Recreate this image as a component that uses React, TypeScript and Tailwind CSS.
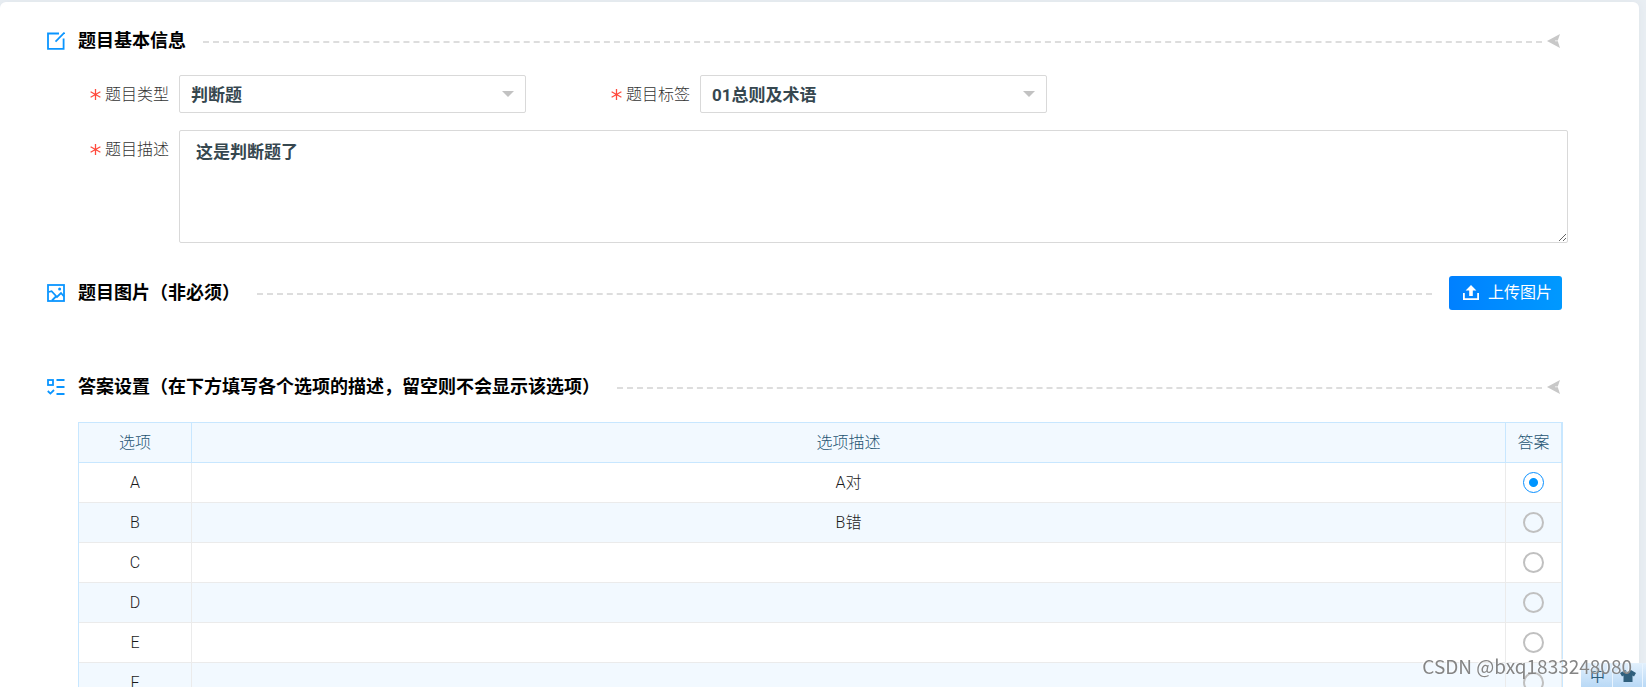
import { useState } from "react";
import type { ReactNode } from "react";

const options = [
  { key: "A", text: "A对" },
  { key: "B", text: "B错" },
  { key: "C", text: "" },
  { key: "D", text: "" },
  { key: "E", text: "" },
  { key: "F", text: "" },
];

function EditIcon() {
  return (
    <svg className="size-[18px]" viewBox="0 0 18 18" fill="none" stroke="#0a95ff">
      <path d="M12 1.5H1V16.8H16.6V6.5" strokeWidth="1.8" />
      <path d="M17.5 .6L8.5 9.6" strokeWidth="1.8" />
    </svg>
  );
}

function PictureIcon() {
  return (
    <svg className="size-[18px]" viewBox="0 0 18 18" fill="none" stroke="#0a95ff" strokeWidth="1.8">
      <rect x="1" y="1" width="16" height="16" />
      <path d="M1.5 8L4.6 7.2L10 13L14 9L17 12.5M5 16.5L9.4 12" />
      <circle cx="12.6" cy="5" r="1.5" fill="#0a95ff" stroke="none" />
    </svg>
  );
}

function ListIcon() {
  return (
    <svg className="size-[18px]" viewBox="0 0 18 18" fill="none" stroke="#0a95ff" strokeWidth="1.8">
      <rect x="1" y="2" width="5" height="5" />
      <path d="M9.5 2H17.5M9.5 9H17.5M9.5 16H17.5M.8 13L3.4 15.6L7 12" />
    </svg>
  );
}

function ArrowTail() {
  return (
    <svg className="h-[14px] w-[13px] shrink-0" viewBox="0 0 13 14" fill="#c8c8c8">
      <path d="M0 7L13 0L10.8 6.4H8V7.2H10.8L13 14Z" />
    </svg>
  );
}

function SectionHead({ icon, title, children }: { icon: ReactNode; title: string; children?: ReactNode }) {
  return (
    <div className="flex h-[34px] items-center">
      {icon}
      <h2 className="ml-[13px] text-[18px] font-bold leading-[26px] text-black">{title}</h2>
      <div className="ml-[17px] mt-0.5 flex-1 border-t-2 border-dashed border-[#ddd]" />
      {children}
    </div>
  );
}

function Label({ htmlFor, children }: { htmlFor: string; children: ReactNode }) {
  return (
    <label
      htmlFor={htmlFor}
      className="flex h-[38px] w-[132px] shrink-0 items-center justify-end gap-1 pr-[10px] text-[16px] font-light text-[#333]"
    >
      <svg className="size-[11px]" viewBox="0 0 11 11" stroke="#ff4a3d" strokeWidth="1.3">
        <path d="M5.5 0V11M.6 2.8L10.4 8.2M10.4 2.8L.6 8.2" />
      </svg>
      <span className="pt-0.5">{children}</span>
    </label>
  );
}

function SelectField({ id, label, value }: { id: string; label: string; value: string }) {
  return (
    <div className="flex">
      <Label htmlFor={id}>{label}</Label>
      <div className="relative w-[347px]">
        <select
          id={id}
          className="h-[38px] w-full appearance-none rounded-[2px] border border-[#d9d9d9] bg-white px-[11px] pt-[3px] text-[17px] font-bold text-[#36474f] outline-none"
        >
          <option>{value}</option>
        </select>
        <svg className="pointer-events-none absolute right-3 top-4 h-[6px] w-3" viewBox="0 0 12 6" fill="#c2c2c2">
          <path d="M0 0H12L6 6Z" />
        </svg>
      </div>
    </div>
  );
}

export default function App() {
  const [answer, setAnswer] = useState("A");
  return (
    <div className="h-screen overflow-hidden bg-[#e9eef3] pr-[7px] pt-[2px] font-['Roboto','Noto_Sans_CJK_SC',sans-serif]">
      <main className="min-h-full rounded-md bg-white pl-[47px] pr-[76px] pt-[22px] shadow-[0_0_8px_#dde4ea]">
        <SectionHead icon={<EditIcon />} title="题目基本信息">
          <div className="ml-[5px] mr-[3px]">
            <ArrowTail />
          </div>
        </SectionHead>

        <form className="-mr-[5px] mt-[17px] flex flex-col gap-[17px]">
          <div className="flex gap-[42px]">
            <SelectField id="type" label="题目类型" value="判断题" />
            <SelectField id="tag" label="题目标签" value="01总则及术语" />
          </div>
          <div className="flex">
            <Label htmlFor="desc">题目描述</Label>
            <textarea
              id="desc"
              defaultValue="这是判断题了"
              className="h-[113px] flex-1 resize rounded-[2px] border border-[#d9d9d9] bg-white px-4 py-[9px] text-[17px] font-bold leading-[25px] text-[#36474f] outline-none"
            />
          </div>
        </form>

        <div className="mt-[33px]">
          <SectionHead icon={<PictureIcon />} title="题目图片（非必须）">
            <button
              type="button"
              className="ml-[17px] mr-px flex h-[34px] items-center gap-[9px] rounded-[3px] bg-linear-to-r from-[#0080ff] to-[#0099ff] pl-[14px] pr-[10px] text-[16px] text-white"
            >
              <svg className="size-4" viewBox="0 0 16 16" fill="white">
                <path d="M8 0L13.4 5.4H9.8V11H6.2V5.4H2.6ZM0 8H1.8V13.2H14.2V8H16V15H0Z" />
              </svg>
              上传图片
            </button>
          </SectionHead>
        </div>

        <div className="mt-[60px]">
          <SectionHead icon={<ListIcon />} title="答案设置（在下方填写各个选项的描述，留空则不会显示该选项）">
            <div className="ml-[5px] mr-[3px]">
              <ArrowTail />
            </div>
          </SectionHead>
        </div>

        <div className="ml-[31px] mt-[18px] border border-[#c8e7ff]">
          <table className="w-full table-fixed border-separate border-spacing-0 text-center text-[16px] font-light leading-5 text-[#1a1a1a]">
            <thead>
              <tr className="h-10 bg-[#f2f9ff] text-[#1f5573]">
                <th className="w-[113px] border-b border-r border-[#c8e7ff] p-0 font-light">选项</th>
                <th className="border-b border-r border-[#c8e7ff] p-0 font-light">选项描述</th>
                <th className="w-[56px] border-b border-r border-[#c8e7ff] p-0 font-light">答案</th>
              </tr>
            </thead>
            <tbody>
              {options.map((o) => (
                <tr key={o.key} className="h-10 even:bg-[#f2f9ff]">
                  <td className="border-b border-r border-[#ebebeb] p-0">{o.key}</td>
                  <td className="border-b border-r border-[#ebebeb] p-0">{o.text}</td>
                  <td className="border-b border-r border-[#ebebeb] p-0">
                    <input
                      type="radio"
                      name="answer"
                      aria-label={o.key}
                      checked={answer === o.key}
                      onChange={() => setAnswer(o.key)}
                      className="mx-auto block size-[21px] appearance-none rounded-full border-2 border-[#c0c0c0] checked:border checked:border-[#0a90ff] checked:bg-[radial-gradient(circle,#0095ff_4px,transparent_5px)]"
                    />
                  </td>
                </tr>
              ))}
            </tbody>
          </table>
        </div>
      </main>

      <div className="fixed bottom-0 right-0 flex h-6 w-[65px] items-center border-t border-[#e3f1fd] bg-linear-to-b from-[#e0effc] to-[#b9d9f6] text-[#2f5f7c]">
        <span className="w-8 border-r border-[#e8f4ff] pl-[9px] text-[15px] leading-6">中</span>
        <span className="flex h-6 w-[30px] items-center justify-center border-r border-[#e8f4ff]">
          <svg className="h-3 w-4" viewBox="0 0 16 12" fill="currentColor">
            <path d="M5 0Q8 2.4 11 0L16 3L14 6.4L12.5 5.6V12H3.5V5.6L2 6.4L0 3Z" />
          </svg>
        </span>
      </div>
      <div className="pointer-events-none fixed bottom-[9px] right-[14px] font-['Noto_Sans_CJK_SC',sans-serif] text-[19px] leading-6 text-[#858585] [text-shadow:-1px_-1px_0_rgba(255,255,255,.7)]">
        CSDN @bxq1833248080
      </div>
    </div>
  );
}
